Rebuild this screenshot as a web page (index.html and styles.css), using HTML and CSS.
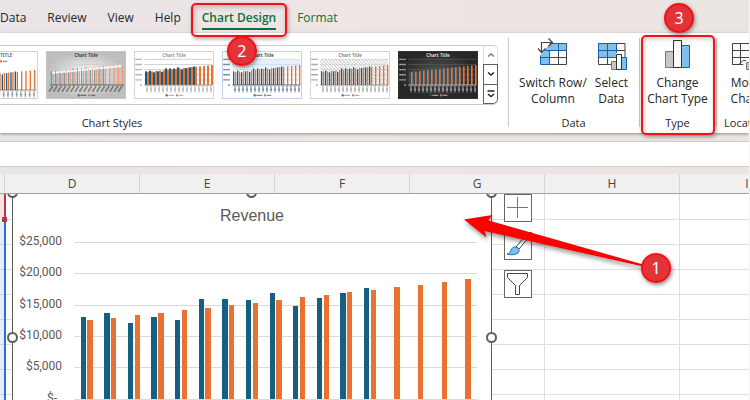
FILE: index.html
```html
<!DOCTYPE html>
<html lang="en">
<head>
<meta charset="utf-8">
<title>Workbook</title>
<link rel="stylesheet" href="styles.css">
</head>
<body>
<nav class="tabs">
  <a href="#data">Data</a>
  <a href="#review">Review</a>
  <a href="#view">View</a>
  <a href="#help">Help</a>
  <a href="#design" class="active">Chart Design<span class="frame frame-tab"></span><span class="badge badge-two">2</span></a>
  <a href="#format" class="contextual">Format</a>
</nav>

<main class="ribbon">
  <section class="group styles-group">
    <div class="gallery">
      <div class="thumbs" id="thumbs"></div>
      <div class="scroller">
        <button type="button" class="dim" aria-label="Previous styles"><svg width="8" height="8" viewBox="0 0 8 8"><path d="M1 5.5 4 3l3 2.5"/></svg></button>
        <button type="button" aria-label="Next styles"><svg width="8" height="8" viewBox="0 0 8 8"><path d="M1 2.5 4 5l3-2.5"/></svg></button>
        <button type="button" aria-label="More styles"><svg width="8" height="8" viewBox="0 0 8 8"><path d="M.5 1h7M1 4l3 2.5L7 4"/></svg></button>
      </div>
    </div>
    <h2>Chart Styles</h2>
  </section>

  <section class="group data-group">
    <div class="commands">
      <button type="button">
        <svg width="32" height="32" viewBox="0 0 32 32">
          <path fill="#83beec" d="M3 5h27v7H12v14H3z"/>
          <path fill="#fafafa" d="M12 12h18v14H12z"/>
          <g fill="none" stroke="#444"><path d="M12.500 12.500h17v14h-17zM12.500 19.500h17M21.500 12.500v14"/><path stroke="#0f63b0" d="M12 5.500h17.500v7H3.500v14h9v-14M21.500 5.500v7M3.500 19.500h9"/></g>
          <path fill="#fff" d="M0 0h17L3 18H0z"/>
          <path fill="none" stroke="#444" stroke-width="1.200" d="M4.500 14V4.500H15M1 10.500l3.500 4 4-4M11.500.5l4 4-4 4"/>
        </svg>
        Switch Row/<br>Column
      </button>
      <button type="button">
        <svg width="32" height="32" viewBox="0 0 32 32">
          <path fill="#83beec" d="M3 5h18v14H3z"/>
          <path fill="#fafafa" d="M21 5h9v14h-9zM3 19h18v7H3z"/>
          <g fill="none" stroke="#444"><path d="M21 5.500h9v21H3.500V19M21 12.500h9M21 19.500h9M12.500 19v7M21.500 19v7"/><path stroke="#0f63b0" d="M3.500 5.500h18v14h-18zM3.500 12.500h18M12.500 5.500v14"/></g>
          <path fill="#fff" d="M16 21h5v-6h8v4h4v13H16z"/>
          <path fill="#c8c6c4" stroke="#777" d="M16.500 23.500h5v8h-5z"/>
          <path fill="#83beec" stroke="#0f63b0" d="M26.500 19.500h5v12h-5z"/>
          <path fill="#fafafa" stroke="#333" d="M21.500 16.500h5v15h-5z"/>
        </svg>
        Select<br>Data
      </button>
    </div>
    <h2>Data</h2>
  </section>

  <section class="group type-group">
    <div class="commands">
      <button type="button">
        <svg width="32" height="32" viewBox="0 0 32 32">
          <path fill="#c8c6c4" stroke="#777" d="M3.500 13.500h8v16h-8z"/>
          <path fill="#83beec" stroke="#0f63b0" d="M19.500 7.500h8v22h-8z"/>
          <path fill="#fafafa" stroke="#333" d="M11.500 2.500h8v27h-8z"/>
        </svg>
        Change<br>Chart Type
      </button>
    </div>
    <h2>Type</h2>
    <span class="frame frame-type"></span><span class="badge badge-three">3</span>
  </section>

  <section class="group location-group">
    <div class="commands">
      <button type="button">
        <svg width="32" height="32" viewBox="0 0 32 32">
          <path fill="#fafafa" stroke="#444" d="M2.500 5.500h27v16l-9 5h-18zM2.500 12.500h27M2.500 19.500h27M10.500 5.500v21M20.500 5.500v21"/>
          <path fill="#fff" d="M8 29h3l6-7v-2h15v12H8z"/>
          <path fill="none" stroke="#444" d="M2 26.500h7l4-4h3"/>
          <path fill="#c8c6c4" stroke="#777" d="M16.500 24.500h5v7h-5z"/>
        </svg>
        Move<br>Chart
      </button>
    </div>
    <h2>Location</h2>
  </section>
</main>

<input class="formula" type="text" aria-label="Formula bar">

<div class="columns"><span></span><span>D</span><span>E</span><span>F</span><span>G</span><span>H</span><span>I</span></div>

<div class="sheet">
  <div class="selection"><span class="range-name"></span><span class="range-values"></span><span class="knob"></span></div>
  <figure class="chart">
    <figcaption>Revenue</figcaption>
    <svg id="plot" width="478" height="230" viewBox="13 194 478 230"></svg>
    <i class="handle top left"></i><i class="handle top center"></i><i class="handle top right"></i>
    <i class="handle middle left"></i><i class="handle middle right"></i>
  </figure>
  <div class="chart-tools">
    <button type="button" aria-label="Chart elements"><svg width="26" height="26" viewBox="0 0 26 26"><path stroke="#3a9b55" fill="none" d="M12.500 2v21M2 12.500h21"/></svg></button>
    <button type="button" aria-label="Chart styles"><svg width="26" height="26" viewBox="0 0 26 26"><path d="M11 14 21 2l3 2-10 12z" fill="#fff" stroke="#444"/><path d="M2 21c3 0 3-2 4-4 1-3 5-4 7-2s1 5-2 6c-3 1-6 1-9 0z" fill="#83beec" stroke="#1668b5"/></svg></button>
    <button type="button" aria-label="Chart filters"><svg width="26" height="26" viewBox="0 0 26 26"><path d="M2.500 2.500h20v4l-8 8v9h-4v-9l-8-8z" fill="#fafafa" stroke="#444"/></svg></button>
  </div>
  <svg class="arrow" width="190" height="60" viewBox="460 210 190 60"><path fill="#f00" d="M464 219.500 492.500 215l-4 5.500L643 264.500v2L484.500 231l2 6.500z"/></svg>
  <span class="badge badge-one">1</span>
</div>
<script src="charts.js"></script>
</body>
</html>
```

FILE: styles.css
```css
* { box-sizing: border-box; }
body {
  margin: 0;
  height: 100vh;
  display: flex;
  flex-direction: column;
  overflow: hidden;
  border-right: 1px solid #f4f2f2;
  background: linear-gradient(90deg, #e9e4e8, #eee5e4 45%, #ebe5e2);
  font: 12px/16px "Open Sans", "Noto Sans", sans-serif;
  color: #262626;
}
button { font: inherit; color: inherit; background: none; border: 0; padding: 0; }

.tabs { display: flex; flex: none; gap: 21px; height: 33px; padding-top: 10px; }
.tabs a { position: relative; height: 20px; color: inherit; text-decoration: none; white-space: nowrap; }
.tabs .active { color: #0f703b; font-weight: 600; border-bottom: 2px solid #0f703b; }
.tabs .contextual { color: #0f703b; }

.frame { position: absolute; border: 2px solid #f5101a; border-radius: 5px; box-shadow: 1px 2px 4px #0005, inset 1px 2px 5px #0003; z-index: 2; }
.frame-tab { inset: -7px -11px -9px; }
.frame-type { inset: 2px 1px -2px 2px; }
.badge {
  position: absolute;
  width: 30px;
  height: 30px;
  border: 2px solid #fb0d12;
  border-radius: 50%;
  background: #e1343a;
  box-shadow: 1px 2px 4px #0007;
  color: #fff;
  font: 16px/26px "Noto Sans", sans-serif;
  text-align: center;
  z-index: 3;
}
.badge-two { left: 25px; top: 26px; }
.badge-three { left: 25px; top: -30px; }
.badge-one { left: 641px; top: 59px; }

.ribbon { display: flex; flex: none; height: 100px; background: #fff; box-shadow: 0 1px 3px #0006; }
.group { position: relative; flex: none; display: flex; flex-direction: column; padding-top: 5px; }
.group + .group::before { content: ""; position: absolute; left: 0; top: 5px; height: 89px; border-left: 1px solid #c8c8c8; }
.group h2 { margin: auto 0 2px; font-size: 11px; line-height: 16px; font-weight: 400; text-align: center; }
.styles-group { width: 508px; padding-top: 12px; }
.styles-group h2 { width: 224px; }
.data-group { width: 131px; }
.type-group { width: 77px; }
.location-group { width: 60px; }
.commands { display: flex; justify-content: center; gap: 8px; }
.commands button { flex: none; font-size: 12px; line-height: 16px; white-space: nowrap; text-align: center; }
.commands svg { display: block; margin: 0 auto 5px; }

.gallery { display: flex; width: 498px; height: 60px; border: 1px solid #cacaca; border-width: 1px 0; border-radius: 0 5px 5px 0; overflow: hidden; }
.thumbs { flex: 1; display: flex; justify-content: flex-end; gap: 8px; padding: 5px 5px 0 0; overflow: hidden; }
.thumbs svg { flex: none; display: block; }
.thumbs text { font: 600 14px "Noto Sans", sans-serif; text-anchor: middle; }
.scroller { display: flex; flex-direction: column; width: 15px; }
.scroller button { flex: 1; border: 1px solid #5f5f5f; border-bottom-width: 0; display: grid; place-items: center; }
.scroller button:last-child { border-bottom-width: 1px; border-radius: 0 0 5px 0; }
.scroller .dim { border-color: #c8c8c8; border-top: 0; opacity: .6; }
.scroller path { fill: none; stroke: #222; stroke-width: 1.4; }

.formula { flex: none; width: 100%; height: 26px; margin: 8px 0 7px; border: 1px solid #cfcccd; border-width: 1px 0; background: #fff; }
.columns { display: flex; flex: none; height: 20px; overflow: hidden; background: #f0f0f0; border-bottom: 1px solid #a2a2a2; }
.columns span { flex: 0 0 135px; border-right: 1px solid #d5d5d5; text-align: center; line-height: 19px; color: #444; }
.columns span:first-child { flex-basis: 5px; }

.sheet {
  position: relative;
  flex: 1;
  min-height: 0;
  overflow: hidden;
  background:
    repeating-linear-gradient(90deg, transparent 0 134px, #dedede 134px 135px) 5px 0,
    repeating-linear-gradient(#fff 0 24px, #dedede 24px 25px) 0 1px,
    #fff;
}
.selection { position: absolute; left: 0; top: 0; bottom: 0; width: 7px; }
.range-name, .range-values { position: absolute; left: 0; width: 6px; border-right: 2px solid #c5303c; }
.range-name { top: 0; height: 24px; background: #c5303c22; }
.range-values { top: 28px; bottom: 0; border-color: #2f6bd0; background: #2f6bd01f; }
.knob { position: absolute; left: 2px; top: 23px; width: 5px; height: 5px; background: #c5303c; }

.chart { position: absolute; left: 12px; top: 0; width: 480px; height: 231px; margin: 0; border: 1px solid #5e5e5e; border-width: 0 1px; background: #fff; }
.chart figcaption { position: absolute; top: 12px; left: 0; right: 0; text-align: center; font: 16px/20px "Liberation Sans", sans-serif; color: #595959; }
.chart svg { display: block; }
.chart text { font: 12px Roboto, sans-serif; fill: #595959; text-anchor: end; }
.handle { position: absolute; width: 11px; height: 11px; border: 2px solid #5e5e5e; border-radius: 50%; background: #fff; }
.handle.top { top: -7px; }
.handle.middle { top: 138px; }
.handle.left { left: -6px; }
.handle.right { right: -6px; }
.handle.center { left: 233px; }

.chart-tools { position: absolute; left: 504px; top: 0; display: grid; gap: 10px; }
.chart-tools button { width: 28px; height: 28px; border: 1px solid #666; background: #fff; }
.chart-tools svg { display: block; }
.arrow { position: absolute; left: 460px; top: 16px; filter: drop-shadow(1px 3px 2px #0006); overflow: visible; }
```

FILE: charts.js
```javascript
const BLUE = "#156082", ORANGE = "#e97132";

// Main plot: bars as [left, width, top] on a shared baseline
const base = 399;
const actual = [[81,5,317],[104,6,313],[128,5,323],[151,6,317],[175,5,320],[199,5,299],[222,6,299],[246,5,300],[270,5,293],[293,5,306],[317,5,298],[340,6,293],[364,5,288]];
const trend = [[87,6,320],[111,5,318],[135,5,315],[158,6,313],[182,5,310],[205,6,308],[229,5,305],[253,5,303],[276,6,300],[300,5,297],[324,5,295],[347,5,292],[371,5,290],[394,6,287],[418,5,285],[442,5,282],[465,6,279]];
const ticks = [["$25,000",242],["$20,000",273],["$15,000",305],["$10,000",336],["$5,000",367],["$-",399]];
const bars = (list, color) => list.map(([x, w, y]) => `<rect x="${x}" y="${y}" width="${w}" height="${base - y}" fill="${color}"/>`).join("");
document.getElementById("plot").innerHTML =
  ticks.map(([t, y]) => `<rect x="74" y="${y}" width="403" height="1" fill="#d9d9d9"/><text x="${t === "$-" ? 57 : 62}" y="${y + 3}">${t}</text>`).join("") +
  bars(actual, BLUE) + bars(trend, ORANGE);

// Gallery previews, drawn on a 240 x 144 canvas
const styles = [
  { bg: "#fff", edge: "#d4d4d4", text: "#555", title: "CHART TITLE", bottom: 117, w: 4, topLegend: true, grid: "none" },
  { bg: "url(#silver)", edge: "#c4c4c4", text: "#333", bottom: 102, w: 4, line: true, grid: "#ccc", slant: true },
  { bg: "#fff", edge: "#d4d4d4", text: "#888", bottom: 102, w: 6, axis: true, grid: "#bbb" },
  { bg: "#fff", edge: "#bcd3ee", text: "#24405e", bottom: 102, w: 4, axis: true, grid: "#c3d6ec", band: true },
  { bg: "#fff", edge: "#d4d4d4", text: "#777", bottom: 102, w: 4, axis: true, grid: "#ccc", hatch: true },
  { bg: "url(#night)", edge: "#333", text: "#e4e4e4", bottom: 102, w: 5, axis: true, grid: "#5c5c5c" }
];
const defs = `<defs>
<radialGradient id="silver"><stop stop-color="#fafafa"/><stop offset="1" stop-color="#bdbdbd"/></radialGradient>
<radialGradient id="night"><stop stop-color="#5a5a5a"/><stop offset="1" stop-color="#262626"/></radialGradient>
<pattern id="hatch" width="10" height="10" patternUnits="userSpaceOnUse"><path d="M0 0l10 10" stroke="#999" stroke-width="2"/></pattern></defs>`;

function preview(s) {
  const left = s.axis ? 33 : 14, step = s.axis ? 12 : 13;
  let out = `<rect x="1.500" y="1.500" width="237" height="141" fill="${s.bg}" stroke="${s.edge}" stroke-width="3"/>`;
  if (s.band) out += `<rect x="31" y="24" width="204" height="26" fill="#e6f0fb"/>`;
  if (s.hatch) out += `<rect x="31" y="24" width="204" height="78" fill="url(#hatch)"/>`;
  for (let i = 0; i < 6; i++) {
    const y = 25 + i * 15.4;
    out += `<path d="M${left - 2} ${y}H234" stroke="${s.grid}" stroke-width="2"/>`;
    if (s.axis) out += `<path d="M${i === 5 ? 18 : 4} ${y}H24" stroke="${s.text}" stroke-width="4" stroke-dasharray="5 1" opacity=".7"/>`;
  }
  const points = [];
  for (let i = 0; i < 17; i++) {
    const x = left + i * step;
    const orangeTop = s.bottom - (base - trend[i][2]) * .5;
    if (actual[i]) {
      const y = s.bottom - (base - actual[i][2]) * .5;
      out += `<rect x="${x}" y="${y}" width="${s.w}" height="${s.bottom - y}" fill="${s.line ? "#6b9db3" : BLUE}"/>`;
    }
    out += `<rect x="${x + 6}" y="${orangeTop}" width="${s.w}" height="${s.bottom - orangeTop}" fill="${s.line ? "#f09c70" : ORANGE}"/>`;
    points.push(`${x + 5},${orangeTop + 3}`);
    out += `<path d="M${x + 6} ${s.bottom + 4}${s.slant ? "l-11 16" : "v18"}" stroke="${s.text}" stroke-width="5" stroke-dasharray="3 1" opacity=".7"/>`;
  }
  if (s.line) out += `<polyline points="${points.join(" ")}" fill="none" stroke="#fff" stroke-width="6" stroke-dasharray="9 2"/>`;
  out += `<path d="M${left - 2} ${s.bottom}H235" stroke="${s.text}" stroke-width="2"/>`;
  const ly = s.topLegend ? 31 : 133;
  out += `<rect x="95" y="${ly - 3}" width="6" height="6" fill="${BLUE}"/><rect x="126" y="${ly - 3}" width="6" height="6" fill="${ORANGE}"/><path d="M103 ${ly}h18M134 ${ly}h14" stroke="${s.text}" stroke-width="4" opacity=".6"/>`;
  out += `<text x="120" y="17" fill="${s.text}">${s.title || "Chart Title"}</text>`;
  return `<svg width="80" height="48" viewBox="0 0 240 144">${out}</svg>`;
}
document.getElementById("thumbs").innerHTML = styles.map(preview).join("");
document.querySelector("#thumbs svg").insertAdjacentHTML("afterbegin", defs);
```
